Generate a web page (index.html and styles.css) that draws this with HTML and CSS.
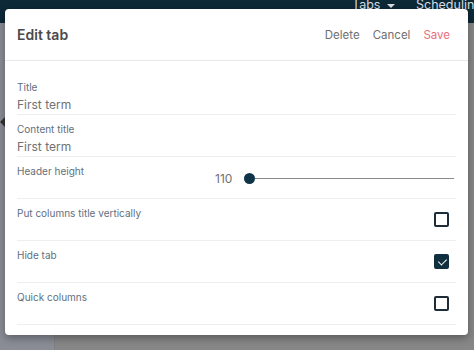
FILE: index.html
```html
<!DOCTYPE html>
<html lang="en">
<head>
  <meta charset="UTF-8">
  <title>Edit tab</title>
  <link rel="stylesheet" href="styles.css">
</head>
<body>
  <header class="navbar">
    <span class="nav-item">Tabs <span class="caret"></span></span>
    <span class="nav-item">Scheduling</span>
  </header>
  <div class="page">
    <aside class="sidebar"><span class="sidebar-arrow"></span></aside>
    <main class="content"></main>
  </div>

  <div class="overlay">
    <div class="modal">
      <div class="modal-header">
        <h2>Edit tab</h2>
        <div class="modal-actions">
          <button class="link-btn">Delete</button>
          <button class="link-btn">Cancel</button>
          <button class="link-btn save">Save</button>
        </div>
      </div>

      <div class="modal-body">
        <label class="field">
          <span class="field-label">Title</span>
          <input class="field-input" type="text" value="First term">
        </label>
        <label class="field">
          <span class="field-label">Content title</span>
          <input class="field-input" type="text" value="First term">
        </label>
        <div class="field field-row">
          <span class="field-label">Header height</span>
          <div class="slider">
            <span class="slider-value">110</span>
            <input type="range" min="110" max="400" value="110">
          </div>
        </div>
        <label class="field field-row">
          <span class="field-label">Put columns title vertically</span>
          <input class="check" type="checkbox">
        </label>
        <label class="field field-row">
          <span class="field-label">Hide tab</span>
          <input class="check" type="checkbox" checked>
        </label>
        <label class="field field-row">
          <span class="field-label">Quick columns</span>
          <input class="check" type="checkbox">
        </label>
      </div>
    </div>
  </div>
</body>
</html>
```

FILE: styles.css
```css
* {
  margin: 0;
  padding: 0;
  box-sizing: border-box;
}

body {
  font-family: Inter, 'Noto Sans', sans-serif;
  width: 474px;
  height: 350px;
  overflow: hidden;
  position: relative;
  background: #888888;
}

.navbar {
  height: 23px;
  background: #0d2837;
  display: flex;
  justify-content: flex-end;
  align-items: flex-start;
  gap: 21px;
  margin-right: -8px;
  color: #d9dee2;
  font-size: 12.5px;
  line-height: 9px;
}

.caret {
  display: inline-block;
  margin-left: 3px;
  border-left: 4px solid transparent;
  border-right: 4px solid transparent;
  border-top: 4px solid #d9dee2;
  vertical-align: middle;
}

.page {
  display: flex;
  height: 327px;
}

.sidebar {
  width: 55px;
  background: #8b8d96;
  border-right: 1px solid #7f8088;
  position: relative;
}

.sidebar-arrow {
  position: absolute;
  left: 0;
  top: 93px;
  border-top: 6px solid transparent;
  border-bottom: 6px solid transparent;
  border-right: 6px solid #333;
}

.content {
  flex: 1;
  background: #878787;
}

.overlay {
  position: absolute;
  inset: 0;
  padding: 9px 6px 0 5px;
}

.modal {
  background: #fff;
  border-radius: 4px;
  height: 326px;
  box-shadow: 0 3px 8px rgba(0, 0, 0, 0.35);
  display: flex;
  flex-direction: column;
}

.modal-header {
  height: 52px;
  display: flex;
  align-items: center;
  justify-content: space-between;
  padding: 0 18px 0 12px;
  border-bottom: 1px solid #e8e8e8;
}

.modal-header h2 {
  font-size: 14px;
  font-weight: 600;
  color: #4a4a4a;
}

.modal-actions {
  display: flex;
  gap: 13px;
}

.link-btn {
  background: none;
  border: none;
  font-family: inherit;
  font-size: 11.5px;
  color: #707070;
  cursor: pointer;
}

.link-btn.save {
  color: #e8707a;
}

.modal-body {
  padding: 12px 12px 0;
}

.field {
  height: 42px;
  display: flex;
  flex-direction: column;
  padding-top: 7px;
  border-bottom: 1px solid #eeeeee;
}

.field-label {
  font-size: 10px;
  line-height: 14px;
  color: #5f707d;
}

.field-input {
  border: none;
  outline: none;
  font-family: inherit;
  font-size: 12px;
  line-height: 18px;
  color: #717171;
  padding: 2px 0 0;
  background: none;
}

.field-row {
  flex-direction: row;
  justify-content: space-between;
  align-items: flex-start;
}

.check {
  appearance: none;
  width: 15px;
  height: 15px;
  border: 2px solid #1d2c36;
  border-radius: 2px;
  margin: 6px 7px 0 0;
  position: relative;
}

.check:checked {
  background: #10303f;
  border-color: #10303f;
}

.check:checked::after {
  content: "";
  position: absolute;
  left: 3.5px;
  top: 1px;
  width: 4px;
  height: 7px;
  border: solid #fff;
  border-width: 0 1.5px 1.5px 0;
  transform: rotate(45deg);
}

.slider {
  width: 241px;
  display: flex;
  align-items: center;
  gap: 12px;
  margin-top: 7px;
}

.slider-value {
  font-size: 12px;
  color: #717171;
}

.slider input[type="range"] {
  appearance: none;
  flex: 1;
  height: 12px;
  background: transparent;
  margin-right: 2px;
}

.slider input[type="range"]::-webkit-slider-runnable-track {
  height: 1px;
  background: #8a8a8a;
}

.slider input[type="range"]::-webkit-slider-thumb {
  appearance: none;
  width: 11px;
  height: 11px;
  border-radius: 50%;
  background: #0f3347;
  margin-top: -5px;
}
```
